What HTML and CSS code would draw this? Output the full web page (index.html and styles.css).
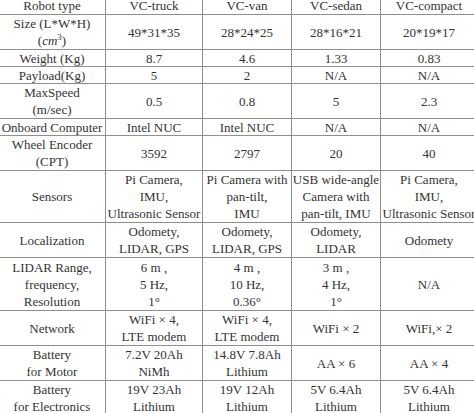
FILE: index.html
```html
<!DOCTYPE html>
<html>
<head>
<meta charset="utf-8">
<link rel="stylesheet" href="styles.css">
</head>
<body>
<div class="spec-table">
  <div class="c h"><span>Robot type</span></div><div class="c h"><span>VC-truck</span></div><div class="c h"><span>VC-van</span></div><div class="c h"><span>VC-sedan</span></div><div class="c h"><span>VC-compact</span></div>

  <div class="c"><span>Size (L*W*H)<br>(<i>cm</i><sup>3</sup>)</span></div><div class="c"><span>49*31*35</span></div><div class="c"><span>28*24*25</span></div><div class="c"><span>28*16*21</span></div><div class="c"><span>20*19*17</span></div>

  <div class="c"><span>Weight (Kg)</span></div><div class="c"><span>8.7</span></div><div class="c"><span>4.6</span></div><div class="c"><span>1.33</span></div><div class="c"><span>0.83</span></div>

  <div class="c"><span>Payload(Kg)</span></div><div class="c"><span>5</span></div><div class="c"><span>2</span></div><div class="c"><span>N/A</span></div><div class="c"><span>N/A</span></div>

  <div class="c"><span>MaxSpeed<br>(m/sec)</span></div><div class="c"><span>0.5</span></div><div class="c"><span>0.8</span></div><div class="c"><span>5</span></div><div class="c"><span>2.3</span></div>

  <div class="c"><span>Onboard Computer</span></div><div class="c"><span>Intel NUC</span></div><div class="c"><span>Intel NUC</span></div><div class="c"><span>N/A</span></div><div class="c"><span>N/A</span></div>

  <div class="c"><span>Wheel Encoder<br>(CPT)</span></div><div class="c"><span>3592</span></div><div class="c"><span>2797</span></div><div class="c"><span>20</span></div><div class="c"><span>40</span></div>

  <div class="c"><span>Sensors</span></div><div class="c"><span>Pi Camera,<br>IMU,<br>Ultrasonic Sensor</span></div><div class="c"><span>Pi Camera with<br>pan-tilt,<br>IMU</span></div><div class="c"><span>USB wide-angle<br>Camera with<br>pan-tilt, IMU</span></div><div class="c"><span>Pi Camera,<br>IMU,<br>Ultrasonic Sensor</span></div>

  <div class="c"><span>Localization</span></div><div class="c"><span>Odomety,<br>LIDAR, GPS</span></div><div class="c"><span>Odomety,<br>LIDAR, GPS</span></div><div class="c"><span>Odomety,<br>LIDAR</span></div><div class="c"><span>Odomety</span></div>

  <div class="c"><span>LIDAR Range,<br>frequency,<br>Resolution</span></div><div class="c"><span>6 m ,<br>5 Hz,<br>1°</span></div><div class="c"><span>4 m ,<br>10 Hz,<br>0.36°</span></div><div class="c"><span>3 m ,<br>4 Hz,<br>1°</span></div><div class="c"><span>N/A</span></div>

  <div class="c"><span>Network</span></div><div class="c"><span>WiFi × 4,<br>LTE modem</span></div><div class="c"><span>WiFi × 4,<br>LTE modem</span></div><div class="c"><span>WiFi × 2</span></div><div class="c"><span>WiFi,× 2</span></div>

  <div class="c"><span>Battery<br>for Motor</span></div><div class="c"><span>7.2V 20Ah<br>NiMh</span></div><div class="c"><span>14.8V 7.8Ah<br>Lithium</span></div><div class="c"><span>AA × 6</span></div><div class="c"><span>AA × 4</span></div>

  <div class="c"><span>Battery<br>for Electronics</span></div><div class="c"><span>19V 23Ah<br>Lithium</span></div><div class="c"><span>19V 12Ah<br>Lithium</span></div><div class="c"><span>5V 6.4Ah<br>Lithium</span></div><div class="c"><span>5V 6.4Ah<br>Lithium</span></div>
</div>
</body>
</html>
```

FILE: styles.css
```css
html, body {
  margin: 0;
  padding: 0;
  background: #fff;
  overflow: hidden;
}

.spec-table {
  display: grid;
  grid-template-columns: 106px 96px 88px 88px 96px;
  grid-template-rows: 16px 34px 16px 16px 34px 16px 34px 51px 34px 52px 34px 34px 34px;
  gap: 1px;
  background: #8f8f8f;
  border: 1px solid #8f8f8f;
  width: max-content;
  margin-left: -2px;
  margin-top: -3px;
  font-family: "Liberation Serif", "Times New Roman", "DejaVu Serif", serif;
  font-size: 13px;
  line-height: 17px;
  color: #333;
}

.c {
  background: #fff;
  display: flex;
  justify-content: center;
  align-items: center;
  text-align: center;
  white-space: nowrap;
}

.c.h {
  padding-bottom: 2px;
}

.c i {
  font-style: italic;
}

.c sup {
  font-size: 9px;
  line-height: 0;
  vertical-align: 5px;
}
```
